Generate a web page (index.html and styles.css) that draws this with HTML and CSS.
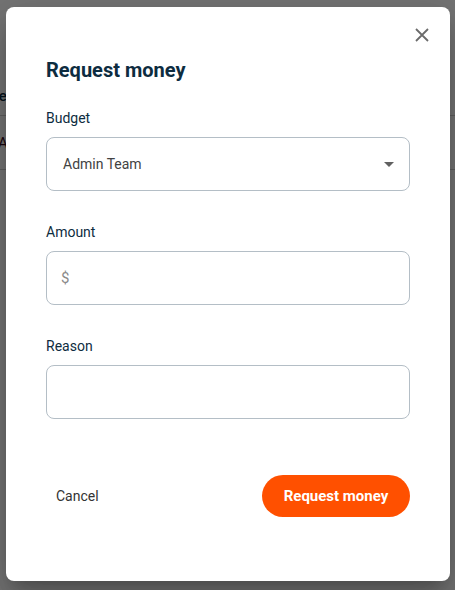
FILE: index.html
```html
<!DOCTYPE html>
<html lang="en">
<head>
    <meta charset="UTF-8">
    <meta name="viewport" content="width=device-width, initial-scale=1.0">
    <title>Request money</title>
    <link rel="stylesheet" href="styles.css">
</head>
<body>
    <div class="page">
        <div class="page-row page-head"><span class="cell">Member</span></div>
        <div class="page-row"><span class="cell">All</span></div>
    </div>

    <div class="overlay"></div>

    <div class="dialog">
        <button class="close-button" type="button" aria-label="Close">
            <svg width="14" height="14" viewBox="0 0 14 14">
                <path d="M1 1 L13 13 M13 1 L1 13" stroke="#6b6b6b" stroke-width="1.8" fill="none"/>
            </svg>
        </button>

        <h1 class="dialog-title">Request money</h1>

        <div class="form-group">
            <label class="form-label">Budget</label>
            <div class="form-input select-input">
                <span>Admin Team</span>
                <svg class="caret" width="10" height="5" viewBox="0 0 10 5">
                    <path d="M0 0 L10 0 L5 5 Z" fill="#616161"/>
                </svg>
            </div>
        </div>

        <div class="form-group">
            <label class="form-label">Amount</label>
            <div class="form-input">
                <span class="prefix">$</span>
            </div>
        </div>

        <div class="form-group">
            <label class="form-label">Reason</label>
            <div class="form-input"></div>
        </div>

        <div class="dialog-actions">
            <button class="cancel-button" type="button">Cancel</button>
            <button class="submit-button" type="button">Request money</button>
        </div>
    </div>
</body>
</html>
```

FILE: styles.css
```css
* {
    margin: 0;
    padding: 0;
    box-sizing: border-box;
}

body {
    font-family: Roboto, 'Liberation Sans', sans-serif;
    background: #ffffff;
    width: 455px;
    height: 590px;
    overflow: hidden;
    position: relative;
}

.page {
    padding-top: 80px;
}

.page-row {
    height: 54px;
    border-bottom: 1px solid #d0d0d0;
    display: flex;
    align-items: center;
}

.page-head {
    height: 36px;
    align-items: flex-end;
    padding-bottom: 10px;
}

.cell {
    font-size: 15px;
    color: #0d2c40;
    margin-left: -44px;
}

.page-head .cell {
    font-weight: 500;
}

.page-row:not(.page-head) .cell {
    margin-left: -2px;
    color: #3a0d20;
}

.overlay {
    position: absolute;
    inset: 0;
    background: rgba(0, 0, 0, 0.54);
}

.dialog {
    position: absolute;
    left: 6px;
    top: 7px;
    width: 444px;
    height: 574px;
    background: #ffffff;
    border-radius: 8px;
    padding: 51px 40px 0 40px;
    box-shadow: 0 11px 15px -7px rgba(0, 0, 0, 0.2), 0 24px 38px 3px rgba(0, 0, 0, 0.14), 0 9px 46px 8px rgba(0, 0, 0, 0.12);
}

.close-button {
    position: absolute;
    top: 21px;
    right: 21px;
    width: 14px;
    height: 14px;
    border: none;
    background: none;
    display: flex;
}

.dialog-title {
    font-size: 20px;
    font-weight: 700;
    color: #0d2c40;
    line-height: 24px;
    margin-bottom: 27px;
}

.form-group {
    margin-bottom: 32px;
}

.form-label {
    display: block;
    font-size: 14px;
    font-weight: 400;
    color: #0d2c40;
    line-height: 18px;
    margin-bottom: 10px;
}

.form-input {
    height: 54px;
    border: 1px solid #b4bec6;
    border-radius: 8px;
    display: flex;
    align-items: center;
    padding: 0 16px;
    font-size: 14px;
    color: #424242;
}

.select-input {
    justify-content: space-between;
    padding-right: 15px;
}

.prefix {
    color: #8a8a8a;
    font-size: 15px;
    margin-left: -2px;
}

.dialog-actions {
    display: flex;
    justify-content: space-between;
    align-items: center;
    margin-top: 56px;
}

.cancel-button {
    border: none;
    background: none;
    font-family: Roboto, 'Liberation Sans', sans-serif;
    font-size: 14px;
    font-weight: 400;
    color: #333333;
    padding: 0 10px;
}

.submit-button {
    border: none;
    background: #ff5000;
    color: #ffffff;
    font-family: Roboto, 'Liberation Sans', sans-serif;
    font-size: 15px;
    font-weight: 700;
    height: 42px;
    width: 148px;
    border-radius: 21px;
}
```
